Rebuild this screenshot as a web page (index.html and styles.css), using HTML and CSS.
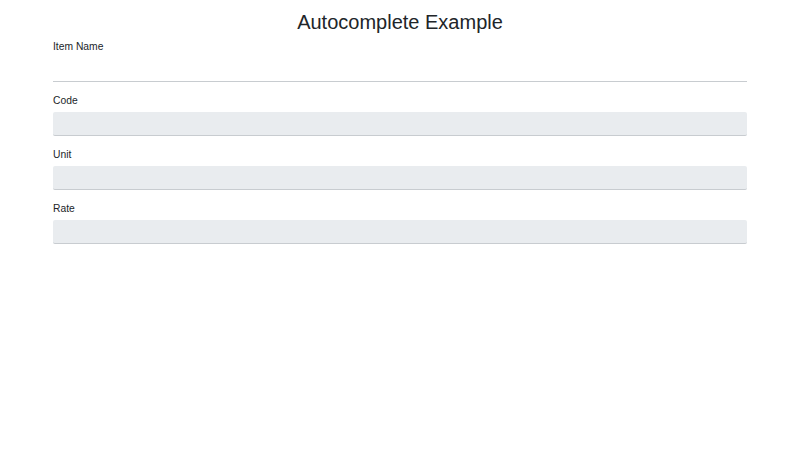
FILE: index.html
```html
<!DOCTYPE html>
<html lang="en">
<head>
<meta charset="utf-8">
<title>Autocomplete Example</title>
<link rel="stylesheet" href="styles.css">
</head>
<body>
<div class="page">
  <h1 class="title">Autocomplete Example</h1>
  <div class="field">
    <label class="label" for="item">Item Name</label>
    <input class="input input-plain" id="item" type="text">
  </div>
  <div class="field">
    <label class="label" for="code">Code</label>
    <input class="input input-filled" id="code" type="text" readonly>
  </div>
  <div class="field">
    <label class="label" for="unit">Unit</label>
    <input class="input input-filled" id="unit" type="text" readonly>
  </div>
  <div class="field">
    <label class="label" for="rate">Rate</label>
    <input class="input input-filled" id="rate" type="text" readonly>
  </div>
</div>
</body>
</html>
```
FILE: styles.css
```css
html, body {
  margin: 0;
  padding: 0;
  background: #ffffff;
}
body {
  font-family: "Liberation Sans", Arial, sans-serif;
  color: #212529;
}
.page {
  padding: 10px 53px 0;
}
.title {
  margin: 0 0 6px;
  font-size: 20px;
  line-height: 24px;
  font-weight: 400;
  text-align: center;
  color: #212529;
}
.field {
  margin-bottom: 12px;
}
.label {
  display: block;
  font-size: 10.3px;
  line-height: 12px;
  padding-top: 1px;
  margin-bottom: 5px;
  color: #212529;
}
.input {
  display: block;
  box-sizing: border-box;
  width: 100%;
  height: 24px;
  margin: 0;
  padding: 0 6px;
  border: none;
  border-bottom: 1px solid #c8ccd0;
  border-radius: 2px;
  font-family: inherit;
  font-size: 10.5px;
  outline: none;
}
.input-plain {
  background: #ffffff;
  border-radius: 0;
}
.input-filled {
  background: #e9ecef;
}
```
